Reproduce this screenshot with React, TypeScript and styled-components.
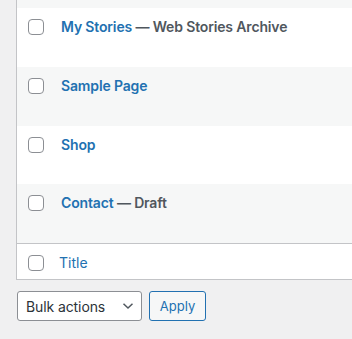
import React from "react";
import styled, { createGlobalStyle } from "styled-components";

const Global = createGlobalStyle`
  html, body { margin: 0; padding: 0; }
  body {
    background: #f0f0f1;
    overflow: hidden;
    font-family: Inter, "Noto Sans", "Liberation Sans", sans-serif;
    font-size: 14px;
    color: #3c434a;
  }
`;

const Page = styled.div`
  padding-left: 16px;
  width: 352px;
  box-sizing: border-box;
`;

const Table = styled.div`
  width: 360px;
  border-left: 1px solid #c3c4c7;
  border-bottom: 1px solid #c3c4c7;
  background: #fff;
  box-sizing: border-box;
`;

const Row = styled.div<{ $striped?: boolean; $h: number }>`
  display: flex;
  align-items: flex-start;
  height: ${(p) => p.$h}px;
  background: ${(p) => (p.$striped ? "#f6f7f7" : "#fff")};
  box-sizing: border-box;
`;

const CheckCell = styled.div`
  width: 44px;
  flex: none;
  padding: 11px 0 0 11px;
  box-sizing: border-box;
`;

const Box = styled.span`
  display: block;
  width: 16px;
  height: 16px;
  border: 1px solid #8c8f94;
  border-radius: 4px;
  background: #fff;
  box-sizing: border-box;
`;

const TitleCell = styled.div`
  padding-top: 9px;
  line-height: 19px;
  font-weight: 600;
  font-size: 14px;
  letter-spacing: -0.15px;
  white-space: nowrap;
`;

const Link = styled.span`
  color: #2271b1;
`;

const State = styled.span`
  color: #50575e;
`;

const Footer = styled.div`
  display: flex;
  align-items: flex-start;
  height: 36px;
  border-top: 1px solid #c3c4c7;
  background: #fff;
  box-sizing: border-box;
`;

const FootTitle = styled.div`
  padding-top: 9px;
  margin-left: -2px;
  line-height: 19px;
  color: #2271b1;
  font-size: 14px;
`;

const Actions = styled.div`
  display: flex;
  gap: 7px;
  padding: 11px 0 0 1px;
`;

const Select = styled.div`
  width: 125px;
  height: 30px;
  border: 1px solid #8c8f94;
  border-radius: 3px;
  background: #fff;
  box-sizing: border-box;
  display: flex;
  align-items: center;
  justify-content: space-between;
  padding: 0 7px 0 8px;
  color: #2c3338;
  font-size: 14px;
  letter-spacing: -0.1px;
`;

const Button = styled.div`
  width: 57px;
  height: 30px;
  border: 1px solid #2271b1;
  border-radius: 3px;
  background: #f6f7f7;
  color: #2271b1;
  box-sizing: border-box;
  display: flex;
  align-items: center;
  justify-content: center;
  font-size: 13px;
`;

const rows = [
  { link: "My Stories", state: "Web Stories Archive", h: 59, striped: false },
  { link: "Sample Page", h: 59, striped: true },
  { link: "Shop", h: 58, striped: false },
  { link: "Contact", state: "Draft", h: 59, striped: true },
];

export default function App() {
  return (
    <Page>
      <Global />
      <Table>
        <Row $striped $h={8} />
        {rows.map((r) => (
          <Row key={r.link} $striped={r.striped} $h={r.h}>
            <CheckCell>
              <Box />
            </CheckCell>
            <TitleCell>
              <Link>{r.link}</Link>
              {r.state && <State> — {r.state}</State>}
            </TitleCell>
          </Row>
        ))}
        <Footer>
          <CheckCell>
            <Box />
          </CheckCell>
          <FootTitle>Title</FootTitle>
        </Footer>
      </Table>
      <Actions>
        <Select>
          <span>Bulk actions</span>
          <svg width="12" height="8" viewBox="0 0 12 8" fill="none">
            <path d="M1.5 1.8 L6 6 L10.5 1.8" stroke="#50575e" strokeWidth="1.5" />
          </svg>
        </Select>
        <Button>Apply</Button>
      </Actions>
    </Page>
  );
}
